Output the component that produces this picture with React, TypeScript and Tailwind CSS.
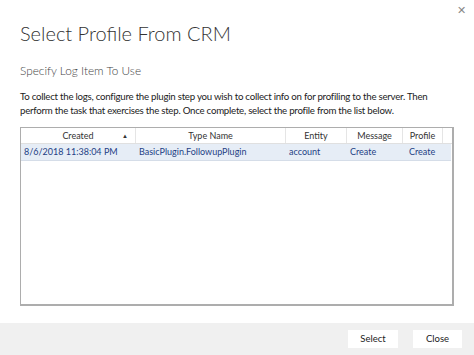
import React from "react";

const columns = [
	{ label: "Created", width: "w-[115px]", pad: "pl-[3px]", sort: true },
	{ label: "Type Name", width: "w-[150px]", pad: "pl-[3px]" },
	{ label: "Entity", width: "w-[61px]", pad: "pl-[3px]" },
	{ label: "Message", width: "w-[56px]", pad: "pl-[3px]" },
	{ label: "Profile", width: "w-[40px]", pad: "pl-[6px]" },
];

const row = ["8/6/2018 11:38:04 PM", "BasicPlugin.FollowupPlugin", "account", "Create", "Create"];

const App = () => {
	return (
		<div className="w-[474px] h-[355px] bg-white flex flex-col overflow-hidden" style={{ fontFamily: 'Lato, "Open Sans", sans-serif' }}>
			<div className="flex justify-end pr-[8px] pt-[4px] h-[14px]">
				<span className="text-[11px] leading-none text-[#888]">✕</span>
			</div>
			<div className="px-[20px] flex flex-col">
				<h1 className="text-[20px] font-light text-[#333] leading-none mt-[9px]">Select Profile From CRM</h1>
				<h2 className="text-[11.8px] font-light text-[#444] leading-none mt-[22px]">Specify Log Item To Use</h2>
				<p className="text-[9.7px] tracking-[-0.25px] text-[#222] leading-[14px] mt-[12px]">
					To collect the logs, configure the plugin step you wish to collect info on for profiling to the server. Then perform the task that exercises the step. Once complete, select the profile from the list below.
				</p>
				<div className="mt-[10px] h-[179px] border border-[#adadad] border-r-2 border-b-2 flex flex-col">
					<div className="flex h-[16px] border-b border-[#e0e0e0]">
						{columns.map((c) => (
							<div key={c.label} className={`${c.width} relative flex items-center justify-center border-r border-[#e5e5e5] text-[9px] text-[#333]`}>
								{c.label}
								{c.sort && <span className="absolute right-[7px] top-[3px] text-[6px] text-[#333]">▲</span>}
							</div>
						))}
					</div>
					<div className="flex h-[17px] bg-[#e6edf6] border-b border-[#d5dde8] mr-[1px]">
						{row.map((v, i) => (
							<div key={i} className={`${columns[i].width} ${columns[i].pad} flex items-center text-[9px] text-[#1e3f85] whitespace-nowrap`}>
								{v}
							</div>
						))}
					</div>
				</div>
			</div>
			<div className="mt-auto h-[32px] bg-[#f0f0f0] flex items-center justify-end gap-[15px] pr-[12px]">
				<button className="w-[50px] h-[18px] bg-white text-[9.5px] text-[#222]">Select</button>
				<button className="w-[49px] h-[18px] bg-white text-[9.5px] text-[#222]">Close</button>
			</div>
		</div>
	);
};

export default App;
